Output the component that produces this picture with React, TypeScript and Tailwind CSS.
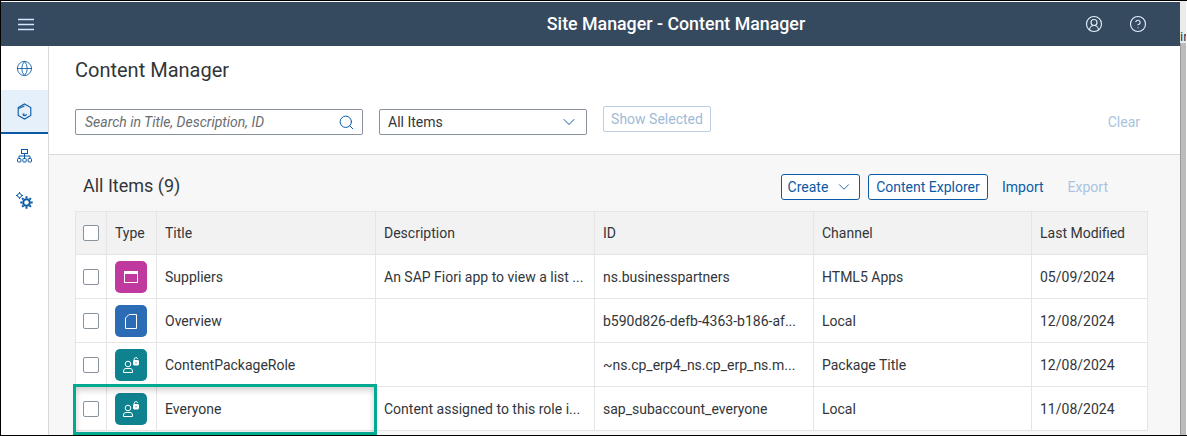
import React from 'react';
import { ChevronDown, CircleHelp, CircleUserRound, Globe, Search } from 'lucide-react';

const ROWS = [
  { title: 'Suppliers', description: 'An SAP Fiori app to view a list ...', id: 'ns.businesspartners', channel: 'HTML5 Apps', modified: '05/09/2024', kind: 'app' },
  { title: 'Overview', description: '', id: 'b590d826-defb-4363-b186-af...', channel: 'Local', modified: '12/08/2024', kind: 'page' },
  { title: 'ContentPackageRole', description: '', id: '~ns.cp_erp4_ns.cp_erp_ns.m...', channel: 'Package Title', modified: '12/08/2024', kind: 'role' },
  { title: 'Everyone', description: 'Content assigned to this role i...', id: 'sap_subaccount_everyone', channel: 'Local', modified: '11/08/2024', kind: 'role' },
];

const GRID = 'grid grid-cols-[31px_50px_219px_219px_219px_218px_117px]';
const CELL = 'flex items-center min-w-0 border-r border-[#e5e5e5] last:border-r-0 px-2 whitespace-nowrap';
const CHECK_CELL = 'flex items-center min-w-0 border-r border-[#e5e5e5] pl-[7px]';

function Checkbox() {
  return <span className="block w-[16px] h-[16px] shrink-0 border border-[#89919a] rounded-[2px] bg-white" />;
}

function HamburgerIcon() {
  return (
    <svg width="16" height="13" viewBox="0 0 16 13" fill="none" stroke="#d1e8ff" strokeWidth="1.6">
      <path d="M0 1.500h16M0 6.500h16M0 11.500h16" />
    </svg>
  );
}

function HexIcon() {
  return (
    <svg width="15" height="17" viewBox="0 0 15 17" fill="none" stroke="#0a5aa5" strokeWidth="1.100">
      <path d="M7.500 1l6.300 3.500v8L7.500 16l-6.300-3.500v-8z" />
      <path d="M1.500 5.500L7.500 3M9.800 11.300a3 3 0 0 1-3.600 1M6.200 12.500v-1.500h1.500" />
    </svg>
  );
}

function SitemapIcon() {
  return (
    <svg width="15" height="15" viewBox="0 0 15 15" fill="none" stroke="#0a5aa5" strokeWidth="1">
      <rect x="4.500" y="0.500" width="6" height="4" />
      <path d="M7.500 4.500V7M2 9.500V7h11v2.500M7.500 7v2.500" />
      <rect x="0.500" y="9.500" width="3.400" height="3.500" rx="0.800" />
      <rect x="5.800" y="9.500" width="3.400" height="3.500" rx="0.800" />
      <rect x="11.100" y="9.500" width="3.400" height="3.500" rx="0.800" />
    </svg>
  );
}

function GearsIcon() {
  return (
    <svg width="17" height="17" viewBox="0 0 17 17" fill="none" stroke="#0a5aa5">
      <circle cx="3.500" cy="3.500" r="2" strokeWidth="1" />
      <path d="M3.500 0v1.200M3.500 5.800V7M0 3.500h1.200M5.800 3.500H7" strokeWidth="1" />
      <circle cx="10.500" cy="10.500" r="3.300" strokeWidth="2" />
      <path d="M10.500 4.300v2M10.500 14.700v2M16.700 10.500h-2M4.300 10.500h2M14.900 6.100l-1.400 1.400M6.100 14.900l1.400-1.400M14.900 14.900l-1.400-1.400M6.100 6.100l1.400 1.400" strokeWidth="2" />
    </svg>
  );
}

function TypeIcon({ kind }: { kind: string }) {
  if (kind === 'app') {
    return (
      <span className="w-8 h-8 shrink-0 rounded-[5px] bg-[#c0399f] flex items-center justify-center">
        <svg width="14" height="12" viewBox="0 0 14 12" fill="none" stroke="#fff" strokeWidth="1">
          <rect x="0.500" y="0.500" width="13" height="11" />
          <rect x="0.500" y="0.500" width="13" height="2" fill="#fff" />
        </svg>
      </span>
    );
  }
  if (kind === 'page') {
    return (
      <span className="w-8 h-8 shrink-0 rounded-[5px] bg-[#2b6cb5] flex items-center justify-center">
        <svg width="12" height="15" viewBox="0 0 12 15" fill="none" stroke="#fff" strokeWidth="1">
          <path d="M4 .5h7.500v14H.5V4z" />
        </svg>
      </span>
    );
  }
  return (
    <span className="w-8 h-8 shrink-0 rounded-[5px] bg-[#0f828f] flex items-center justify-center">
      <svg width="16" height="16" viewBox="0 0 16 16" fill="none" stroke="#fff" strokeWidth="1">
        <circle cx="5" cy="7" r="2.800" />
        <path d="M.5 15.500V14a2.500 2.500 0 0 1 2.500-2.500h4A2.500 2.500 0 0 1 9.500 14v1.500z" />
        <path d="M11.200 3.500V2.300a1.800 1.800 0 0 1 3.500-.5" />
        <rect x="10.500" y="3.500" width="5" height="4.500" fill="#fff" rx="0.500" />
        <rect x="12.500" y="5.200" width="1" height="1.200" fill="#0f828f" stroke="none" />
      </svg>
    </span>
  );
}

export default function App() {
  return (
    <div className="w-[1187px] h-[436px] overflow-hidden flex box-border border-t border-b border-l border-black bg-white text-[14px] text-[#32363a] font-['Roboto',sans-serif]">
      <div className="w-[1179px] flex flex-col border-t border-t-white bg-white shrink-0 overflow-hidden">
        <header className="h-[44px] shrink-0 bg-[#354a5f] flex items-center text-white">
          <div className="w-[33px] flex justify-end shrink-0">
            <HamburgerIcon />
          </div>
          <div className="flex-1 text-center text-[17.800px] font-medium pl-[233px]">Site Manager - Content Manager</div>
          <div className="flex items-center gap-[26px] pr-[33px] text-[#e3f0ff]">
            <CircleUserRound size={18} strokeWidth={1.5} />
            <CircleHelp size={18} strokeWidth={1.5} />
          </div>
        </header>

        <div className="flex flex-1 min-h-0">
          <nav className="w-[48px] shrink-0 border-r border-[#d9d9d9] bg-white">
            <div className="h-[44px] flex items-center justify-center">
              <Globe size={17} strokeWidth={1.2} className="text-[#0a5aa5]" />
            </div>
            <div className="h-[44px] flex items-center justify-center bg-[#e5f0fa] border-b-2 border-[#0a5aa5]">
              <HexIcon />
            </div>
            <div className="h-[44px] flex items-center justify-center">
              <SitemapIcon />
            </div>
            <div className="h-[44px] flex items-center justify-center">
              <GearsIcon />
            </div>
          </nav>

          <main className="flex-1 min-w-0 flex flex-col">
            <section className="h-[109px] shrink-0 border-b border-[#d9d9d9] pl-[26px] pr-[40px] bg-white">
              <h1 className="text-[20px] leading-[26px] pt-[11px] font-normal">Content Manager</h1>
              <div className="flex items-start mt-[23px]">
                <div className="w-[288px] h-[26px] mt-[3px] border border-[#89919a] rounded-[2px] flex items-center pl-[9px] pr-[7px] justify-between">
                  <span className="italic text-[#6a6d70]">Search in Title, Description, ID</span>
                  <Search size={17} strokeWidth={1.4} className="text-[#0a5aa5]" />
                </div>
                <div className="w-[208px] h-[26px] mt-[3px] ml-[16px] border border-[#89919a] rounded-[2px] flex items-center pl-[8px] pr-[7px] justify-between">
                  <span>All Items</span>
                  <ChevronDown size={20} strokeWidth={1.2} className="text-[#0a5aa5]" />
                </div>
                <div className="h-[26px] w-[108px] ml-[16px] border border-[#b8cfe6] rounded-[2px] text-[#9fbad6] flex items-center justify-center">Show Selected</div>
                <div className="ml-auto mt-[3px] h-[26px] flex items-center text-[#a9c4e0]">Clear</div>
              </div>
            </section>

            <section className="flex-1 min-h-0 bg-[#f7f7f7] pl-[26px] pr-[32px] overflow-hidden">
              <div className="h-[56px] flex items-center pl-[8px] pr-[40px] pt-[8px]">
                <h2 className="text-[18px] font-normal mb-[3px]">All Items (9)</h2>
                <div className="ml-auto flex items-center">
                  <div className="h-[26px] w-[79px] border border-[#0a5aa5] rounded-[3px] bg-white text-[#0a5aa5] flex items-center justify-center gap-[7px]">
                    Create <ChevronDown size={18} strokeWidth={1.2} />
                  </div>
                  <div className="h-[26px] w-[120px] ml-[8px] border border-[#0a5aa5] rounded-[3px] bg-white text-[#0a5aa5] flex items-center justify-center">Content Explorer</div>
                  <span className="ml-[14px] text-[#0a5aa5]">Import</span>
                  <span className="ml-[24px] text-[#a9c4e0]">Export</span>
                </div>
              </div>

              <div className="border-l border-r border-[#e5e5e5] relative">
                <div className={`${GRID} h-[44px] bg-[#f2f2f2] border-t border-b border-[#e5e5e5]`}>
                  <div className={CHECK_CELL}><Checkbox /></div>
                  <div className={CELL}>Type</div>
                  <div className={CELL}>Title</div>
                  <div className={CELL}>Description</div>
                  <div className={CELL}>ID</div>
                  <div className={CELL}>Channel</div>
                  <div className={CELL}>Last Modified</div>
                </div>
                {ROWS.map((row) => (
                  <div key={row.title} className={`${GRID} h-[44px] bg-white border-b border-[#e5e5e5]`}>
                    <div className={`${CHECK_CELL} pt-[1px]`}><Checkbox /></div>
                    <div className={`${CELL} pt-[1px]`}><TypeIcon kind={row.kind} /></div>
                    <div className={`${CELL} pt-[1px]`}>{row.title}</div>
                    <div className={`${CELL} pt-[1px]`}>{row.description}</div>
                    <div className={`${CELL} pt-[1px]`}>{row.id}</div>
                    <div className={`${CELL} pt-[1px]`}>{row.channel}</div>
                    <div className={`${CELL} pt-[1px]`}>{row.modified}</div>
                  </div>
                ))}
                {/* green highlight drawn over the Everyone row */}
                <div className="absolute left-[-3px] top-[173px] w-[304px] h-[51px] border-[3px] border-[#00a98f] shadow-[inset_0_3px_6px_rgba(0,0,0,0.2)] pointer-events-none" />
              </div>
            </section>
          </main>
        </div>
      </div>
      <div className="w-[6px] shrink-0 flex flex-col overflow-hidden">
        <div className="h-[42px] shrink-0 bg-[#ececec] pt-[29px] text-[13px] leading-none whitespace-nowrap">ir</div>
        <div className="flex-1 bg-[#bcbcbc] border-l border-[#9a9a9a]" />
      </div>
    </div>
  );
}
